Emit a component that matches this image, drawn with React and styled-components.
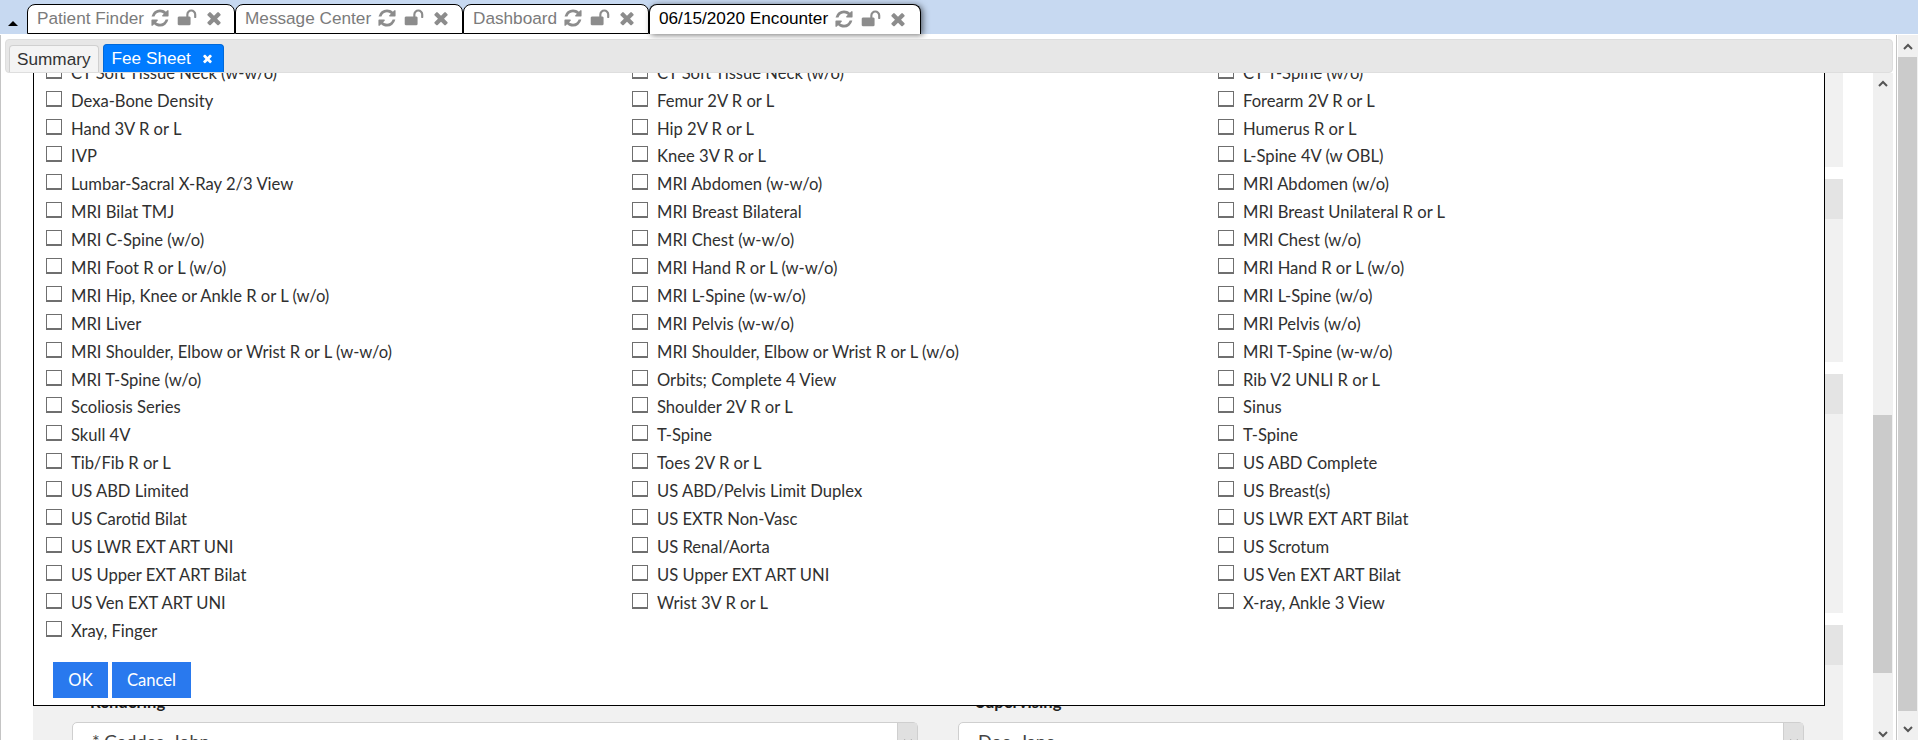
import React from 'react';
import styled, { createGlobalStyle } from 'styled-components';
import { FaChevronDown } from 'react-icons/fa';

const GlobalStyle = createGlobalStyle`
  html, body { margin: 0; padding: 0; background: #fff; overflow: hidden; }
  * { box-sizing: border-box; }
`;

const Page = styled.div`
  width: 1918px;
  height: 740px;
  display: flex;
  flex-direction: column;
  overflow: hidden;
  font-family: "Liberation Sans", Arial, sans-serif;
`;

const TabBar = styled.div`
  height: 35px;
  flex: none;
  display: flex;
  align-items: flex-end;
  background: #c7d9f1;
  border-bottom: 1px solid #fff;
`;

const TabToggle = styled.div`
  width: 27px;
  height: 100%;
  display: flex;
  align-items: center;
  padding: 12px 0 0 8px;
`;

const Triangle = styled.span`
  width: 0;
  height: 0;
  border-left: 5px solid transparent;
  border-right: 5px solid transparent;
  border-bottom: 5px solid #000;
`;

const Tab = styled.div`
  height: 30px;
  width: ${(p) => p.$width}px;
  flex: none;
  display: flex;
  align-items: center;
  padding: 0 0 2px 9px;
  background: #fff;
  border: 1px solid #000;
  border-bottom: ${(p) => (p.$active ? 'none' : '1px solid #000')};
  border-radius: 8px 8px 0 0;
  font-size: 17.2px;
  color: ${(p) => (p.$active ? '#000' : '#7b7b7b')};
  box-shadow: ${(p) => (p.$active ? '2px 1px 6px rgba(0, 0, 0, 0.55)' : 'none')};
  position: relative;
  z-index: ${(p) => (p.$active ? 1 : 0)};
`;

const TabTitle = styled.span`
  white-space: nowrap;
  margin-right: 6px;
`;

const TabIcons = styled.span`
  display: flex;
  align-items: center;
  gap: 7px;
  color: #8c8c8c;
`;

const Workspace = styled.div`
  flex: 1;
  min-height: 0;
  display: flex;
`;

const Frame = styled.div`
  width: 1897px;
  flex: none;
  display: flex;
  flex-direction: column;
  position: relative;
  border-left: 1px solid #c4c4c4;
  border-right: 1px solid #c4c4c4;
  background: #fff;
`;

const SubNav = styled.div`
  height: 34px;
  flex: none;
  margin: 4px 3px 0 4px;
  padding: 5px 0 0 3px;
  display: flex;
  align-items: stretch;
  gap: 4px;
  background: #e7e7e7;
  border: 1px solid #dedede;
  border-radius: 4px;
  position: relative;
  z-index: 2;
`;

const SubTab = styled.div`
  display: flex;
  align-items: center;
  gap: 10px;
  padding: 0 ${(p) => (p.$active ? '9px' : '7px')} 0 ${(p) => (p.$active ? '8px' : '7px')};
  margin-top: ${(p) => (p.$active ? '-1px' : '0')};
  font-size: 17.2px;
  color: ${(p) => (p.$active ? '#fff' : '#333')};
  background: ${(p) => (p.$active ? '#007bff' : '#f4f4f4')};
  border: 1px solid ${(p) => (p.$active ? '#0069d9' : '#d0d0d0')};
  border-bottom: none;
  border-radius: 4px 4px 0 0;
`;

const Body = styled.div`
  flex: 1;
  min-height: 0;
  display: flex;
  padding: 0 3px 0 32px;
  overflow: hidden;
`;

const Sheet = styled.div`
  width: 1810px;
  flex: none;
  display: flex;
  flex-direction: column;
  gap: 12px;
  font-family: Lato, sans-serif;
`;

const CardHeader = styled.div`
  height: 40px;
  flex: none;
  background: #e4e4e4;
`;

const CardBody = styled.div`
  height: ${(p) => p.$height}px;
  flex: ${(p) => (p.$height ? 'none' : 1)};
  background: #f1f1f1;
`;

const ProviderForm = styled(CardBody)`
  display: grid;
  grid-template-columns: 1fr 1fr;
  column-gap: 40px;
  padding: 25px 39px 0;
`;

const Label = styled.div`
  font-size: 16.6px;
  font-weight: 700;
  line-height: 24px;
  padding-left: 18px;
  margin-bottom: 8px;
  color: #222;
`;

const Select = styled.div`
  height: 38px;
  display: flex;
  justify-content: space-between;
  background: #fff;
  border: 1px solid #cfcfcf;
  border-radius: 5px;
  font-size: 18px;
  line-height: 24px;
  padding-left: 19px;
  color: #444;
`;

const SelectText = styled.span`
  padding-top: 6px;
`;

const SelectArrow = styled.span`
  width: 20px;
  display: flex;
  justify-content: center;
  padding-top: 14px;
  background: #e0e0e0;
  border-left: 1px solid #cfcfcf;
  color: #888;
  font-size: 10px;
`;

const Scrollbar = styled.div`
  width: 20px;
  flex: none;
  display: flex;
  flex-direction: column;
  background: #f0f0f0;
  margin-left: ${(p) => p.$gap}px;
`;

const ScrollCell = styled.div`
  height: ${(p) => p.$height}px;
  flex: none;
  display: flex;
  align-items: center;
  justify-content: center;
`;

const ScrollThumb = styled.div`
  height: ${(p) => p.$height}px;
  flex: none;
  width: 19px;
  margin-top: ${(p) => p.$offset}px;
  background: #cbcbcb;
`;

const ScrollSpacer = styled.div`
  flex: 1;
`;

const Modal = styled.div`
  position: absolute;
  top: 38px;
  left: 32px;
  width: 1792px;
  height: 633px;
  z-index: 1;
  display: flex;
  flex-direction: column;
  justify-content: flex-end;
  overflow: hidden;
  background: #fff;
  border: 1px solid #000;
  border-top: none;
  font-family: Lato, sans-serif;
`;

const OptionGrid = styled.div`
  display: grid;
  grid-template-columns: repeat(3, 586px);
  grid-auto-rows: 27.9px;
  padding-left: 12px;
  flex: none;
`;

const Option = styled.label`
  display: flex;
  align-items: center;
  gap: 9px;
  font-size: 16.6px;
  color: #303030;
  white-space: nowrap;
`;

const CheckBox = styled.input.attrs({ type: 'checkbox' })`
  appearance: none;
  width: 16px;
  height: 16px;
  margin: -4px 0 0;
  flex: none;
  background: #fff;
  border: 1px solid #6f6f6f;
  border-bottom-width: 2px;
`;

const ModalFooter = styled.div`
  flex: none;
  display: flex;
  gap: 4px;
  padding: 17.5px 0 7px 19px;
`;

const Button = styled.button`
  height: 36px;
  width: ${(p) => p.$width}px;
  padding: 0;
  border: none;
  background: #2979ee;
  color: #fff;
  font-family: Lato, sans-serif;
  font-size: 16.6px;
`;

const tabs = [
  { title: 'Patient Finder', width: 208 },
  { title: 'Message Center', width: 228 },
  { title: 'Dashboard', width: 186 },
  { title: '06/15/2020 Encounter', width: 272, active: true },
];

const options = [
  'CT Soft Tissue Neck (w-w/o)', 'CT Soft Tissue Neck (w/o)', 'CT T-Spine (w/o)',
  'Dexa-Bone Density', 'Femur 2V R or L', 'Forearm 2V R or L',
  'Hand 3V R or L', 'Hip 2V R or L', 'Humerus R or L',
  'IVP', 'Knee 3V R or L', 'L-Spine 4V (w OBL)',
  'Lumbar-Sacral X-Ray 2/3 View', 'MRI Abdomen (w-w/o)', 'MRI Abdomen (w/o)',
  'MRI Bilat TMJ', 'MRI Breast Bilateral', 'MRI Breast Unilateral R or L',
  'MRI C-Spine (w/o)', 'MRI Chest (w-w/o)', 'MRI Chest (w/o)',
  'MRI Foot R or L (w/o)', 'MRI Hand R or L (w-w/o)', 'MRI Hand R or L (w/o)',
  'MRI Hip, Knee or Ankle R or L (w/o)', 'MRI L-Spine (w-w/o)', 'MRI L-Spine (w/o)',
  'MRI Liver', 'MRI Pelvis (w-w/o)', 'MRI Pelvis (w/o)',
  'MRI Shoulder, Elbow or Wrist R or L (w-w/o)', 'MRI Shoulder, Elbow or Wrist R or L (w/o)', 'MRI T-Spine (w-w/o)',
  'MRI T-Spine (w/o)', 'Orbits; Complete 4 View', 'Rib V2 UNLI R or L',
  'Scoliosis Series', 'Shoulder 2V R or L', 'Sinus',
  'Skull 4V', 'T-Spine', 'T-Spine',
  'Tib/Fib R or L', 'Toes 2V R or L', 'US ABD Complete',
  'US ABD Limited', 'US ABD/Pelvis Limit Duplex', 'US Breast(s)',
  'US Carotid Bilat', 'US EXTR Non-Vasc', 'US LWR EXT ART Bilat',
  'US LWR EXT ART UNI', 'US Renal/Aorta', 'US Scrotum',
  'US Upper EXT ART Bilat', 'US Upper EXT ART UNI', 'US Ven EXT ART Bilat',
  'US Ven EXT ART UNI', 'Wrist 3V R or L', 'X-ray, Ankle 3 View',
  'Xray, Finger',
];

// font awesome 4 shapes, the icon packages only carry the newer ones
const Glyph = ({ d, size = 20 }) => (
  <svg width={size} height={size} viewBox="0 0 1792 1792" fill="currentColor">
    <path d={d} />
  </svg>
);

const REFRESH = 'M1639 1056q0 5-1 7-64 268-268 434.500t-478 166.500q-146 0-282.500-55t-243.500-157l-129 129q-19 19-45 19t-45-19-19-45v-448q0-26 19-45t45-19h448q26 0 45 19t19 45-19 45l-137 137q71 66 161 102t187 36q134 0 250-65t186-179q11-17 53-117 8-23 30-23h192q13 0 22.500 9.500t9.500 22.500zm25-800v448q0 26-19 45t-45 19h-448q-26 0-45-19t-19-45 19-45l138-138q-148-137-349-137-134 0-250 65t-186 179q-11 17-53 117-8 23-30 23h-199q-13 0-22.500-9.500t-9.500-22.500v-7q65-268 270-434.500t480-166.500q146 0 284 55.500t245 156.500l130-129q19-19 45-19t45 19 19 45z';
const UNLOCK = 'M1728 576v256q0 26-19 45t-45 19h-64q-26 0-45-19t-19-45v-256q0-106-75-181t-181-75-181 75-75 181v192h96q40 0 68 28t28 68v576q0 40-28 68t-68 28h-960q-40 0-68-28t-28-68v-576q0-40 28-68t68-28h672v-192q0-185 131.500-316.500t316.500-131.500 316.500 131.500 131.500 316.500z';
const TIMES = 'M1490 1322q0 40-28 68l-136 136q-28 28-68 28t-68-28l-294-294-294 294q-28 28-68 28t-68-28l-136-136q-28-28-28-68t28-68l294-294-294-294q-28-28-28-68t28-68l136-136q28-28 68-28t68 28l294 294 294-294q28-28 68-28t68 28l136 136q28 28 28 68t-28 68l-294 294 294 294q28 28 28 68z';

const Chevron = ({ up }) => (
  <svg width="10" height="7" viewBox="0 0 10 7" fill="none" stroke="#555" strokeWidth="2">
    <polyline points={up ? '1,6 5,2 9,6' : '1,1 5,5 9,1'} />
  </svg>
);

const App = () => {
  return (
    <Page>
      <GlobalStyle />
      <TabBar>
        <TabToggle><Triangle /></TabToggle>
        {tabs.map((tab) => (
          <Tab key={tab.title} $width={tab.width} $active={tab.active}>
            <TabTitle>{tab.title}</TabTitle>
            <TabIcons>
              <Glyph d={REFRESH} />
              <Glyph d={UNLOCK} />
              <Glyph d={TIMES} />
            </TabIcons>
          </Tab>
        ))}
      </TabBar>
      <Workspace>
        <Frame>
          <SubNav>
            <SubTab>Summary</SubTab>
            <SubTab $active>
              Fee Sheet
              <Glyph d={TIMES} size={13} />
            </SubTab>
          </SubNav>
          <Body>
            <Sheet>
              <CardBody $height={94} />
              <div>
                <CardHeader />
                <CardBody $height={143} />
              </div>
              <div>
                <CardHeader />
                <CardBody $height={199} />
              </div>
              <div>
                <CardHeader />
                <ProviderForm $height={120}>
                  <div>
                    <Label>Rendering</Label>
                    <Select>
                      <SelectText>* Gaddes, John</SelectText>
                      <SelectArrow><FaChevronDown /></SelectArrow>
                    </Select>
                  </div>
                  <div>
                    <Label>Supervising</Label>
                    <Select>
                      <SelectText>Doe, Jane</SelectText>
                      <SelectArrow><FaChevronDown /></SelectArrow>
                    </Select>
                  </div>
                </ProviderForm>
              </div>
            </Sheet>
            <Scrollbar $gap={30}>
              <ScrollCell $height={20}><Chevron up /></ScrollCell>
              <ScrollThumb $offset={322} $height={258} />
              <ScrollSpacer />
              <ScrollCell $height={12}><Chevron /></ScrollCell>
            </Scrollbar>
          </Body>
          <Modal>
            <OptionGrid>
              {options.map((name, i) => (
                <Option key={i}>
                  <CheckBox />
                  {name}
                </Option>
              ))}
            </OptionGrid>
            <ModalFooter>
              <Button $width={55}>OK</Button>
              <Button $width={79}>Cancel</Button>
            </ModalFooter>
          </Modal>
        </Frame>
        <Scrollbar $gap={1}>
          <ScrollCell $height={22}><Chevron up /></ScrollCell>
          <ScrollThumb $offset={0} $height={654} />
          <ScrollSpacer />
          <ScrollCell $height={22}><Chevron /></ScrollCell>
        </Scrollbar>
      </Workspace>
    </Page>
  );
};

export default App;
